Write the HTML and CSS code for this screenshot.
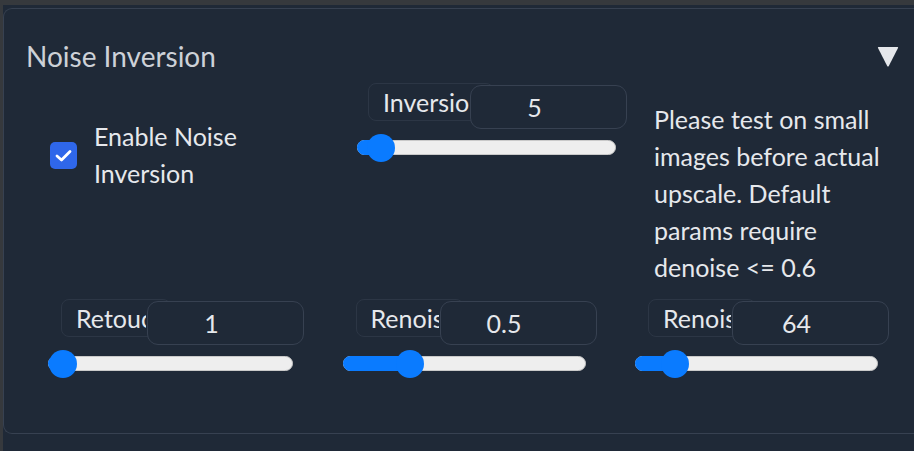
FILE: index.html
```html
<!DOCTYPE html>
<html lang="en">
<head>
<meta charset="utf-8">
<title>Noise Inversion</title>
<link rel="stylesheet" href="styles.css">
</head>
<body>
<div class="frame">
  <section class="panel">
    <div class="title-row">
      <span class="title">Noise Inversion</span>
      <svg class="caret" width="22" height="21" viewBox="0 0 22 21" aria-hidden="true">
        <path d="M1.5 1 L20.5 1 Q21.5 1 21 2 L11.8 20 Q11 21 10.2 20 L1 2 Q0.5 1 1.5 1 Z" fill="#e5e7eb"/>
      </svg>
    </div>

    <div class="row row-top">
      <div class="col-check">
        <label class="check">
          <span class="box">
            <svg width="17" height="13" viewBox="0 0 17 13" aria-hidden="true">
              <path d="M2 7 L6.5 11 L15 2.5" fill="none" stroke="#ffffff" stroke-width="2.8" stroke-linecap="round" stroke-linejoin="round"/>
            </svg>
          </span>
          <span class="check-text">Enable Noise Inversion</span>
        </label>
      </div>

      <div class="slider slider-wide">
        <div class="head">
          <span class="lbl"><span class="lbl-text">Inversion steps</span></span>
          <span class="num">5</span>
        </div>
        <div class="track">
          <span class="fill" style="width:23px"></span>
          <span class="thumb" style="left:23px"></span>
        </div>
      </div>

      <div class="note">Please test on small images before actual upscale. Default params require denoise &lt;= 0.6</div>
    </div>

    <div class="row row-bottom">
      <div class="slider">
        <div class="head">
          <span class="lbl"><span class="lbl-text">Retouch</span></span>
          <span class="num">1</span>
        </div>
        <div class="track">
          <span class="fill" style="width:14px"></span>
          <span class="thumb" style="left:14px"></span>
        </div>
      </div>

      <div class="slider">
        <div class="head">
          <span class="lbl"><span class="lbl-text">Renoise strength</span></span>
          <span class="num">0.5</span>
        </div>
        <div class="track">
          <span class="fill" style="width:66px"></span>
          <span class="thumb" style="left:66px"></span>
        </div>
      </div>

      <div class="slider">
        <div class="head">
          <span class="lbl"><span class="lbl-text">Renoise kernel size</span></span>
          <span class="num">64</span>
        </div>
        <div class="track">
          <span class="fill" style="width:39px"></span>
          <span class="thumb" style="left:39px"></span>
        </div>
      </div>
    </div>
  </section>
</div>
</body>
</html>
```

FILE: styles.css
```css
html, body {
  margin: 0;
  padding: 0;
}

body {
  background: #36393d;
  font-family: "Lato", "Noto Sans", sans-serif;
  color: #e6e8ec;
  width: 914px;
  height: 451px;
  overflow: hidden;
}

.frame {
  margin: 5px 0 0 3px;
  padding-top: 3px;
  background: #1f2937;
  height: 446px;
  box-sizing: border-box;
}

.panel {
  box-sizing: border-box;
  height: 426px;
  border: 1px solid #374151;
  border-right: none;
  border-radius: 9px 0 0 9px;
  background: #1f2937;
  padding: 0 15px 0 22px;
}

.title-row {
  display: flex;
  align-items: center;
  justify-content: space-between;
  padding-top: 27px;
  height: 40px;
}

.title {
  font-size: 28px;
  line-height: 40px;
  color: #cdd1d7;
}

.caret {
  display: block;
}

.row {
  display: grid;
  align-items: start;
}

.row-top {
  margin-top: 7px;
  padding-left: 24px;
  grid-template-columns: 281px 270px 1fr;
  column-gap: 26px;
}

.row-bottom {
  margin-top: 13px;
  padding-left: 22px;
  grid-template-columns: 256px 254px 254px;
  column-gap: 38.5px;
}

.col-check {
  padding-top: 35px;
}

.check {
  display: flex;
  align-items: center;
  gap: 17px;
}

.box {
  flex: none;
  width: 27px;
  height: 27px;
  border-radius: 5px;
  background: #2f67ea;
  display: flex;
  align-items: center;
  justify-content: center;
}

.box svg {
  display: block;
}

.check-text {
  font-size: 25px;
  line-height: 37px;
  max-width: 170px;
}

.note {
  padding-top: 18px;
  max-width: 245px;
  font-size: 25px;
  line-height: 37px;
  padding-left: 1px;
}

.slider {
  display: flex;
  flex-direction: column;
}

.head {
  display: flex;
  align-items: flex-start;
  height: 46px;
  padding: 0 0 0 13px;
}

.slider-wide .head {
  padding-left: 11px;
}

.lbl {
  flex: 1;
  min-width: 0;
  box-sizing: border-box;
  height: 38px;
  padding: 0 24px 0 14px;
  margin-right: -24px;
  border: 1px solid #2c3645;
  border-radius: 8px;
}

.lbl-text {
  display: block;
  font-size: 25px;
  line-height: 36px;
  white-space: nowrap;
  overflow: hidden;
}

.num {
  flex: none;
  position: relative;
  z-index: 1;
  box-sizing: border-box;
  width: 157px;
  height: 44px;
  margin-top: 2px;
  border: 1px solid #374151;
  border-radius: 11px;
  background: #1f2937;
  text-align: center;
  padding-right: 28px;
  font-size: 25px;
  line-height: 42px;
}

.track {
  position: relative;
  box-sizing: border-box;
  margin-top: 11px;
  margin-right: 11px;
  height: 15px;
  border-radius: 8px;
  background: #eeeeee;
  border: 1px solid #c9c9c9;
}

.fill {
  position: absolute;
  left: -1px;
  top: -1px;
  bottom: -1px;
  border-radius: 8px 0 0 8px;
  background: #0a7bff;
}

.thumb {
  position: absolute;
  top: 50%;
  width: 28px;
  height: 28px;
  margin: -14px 0 0 -14px;
  border-radius: 50%;
  background: #0a7bff;
}
```
